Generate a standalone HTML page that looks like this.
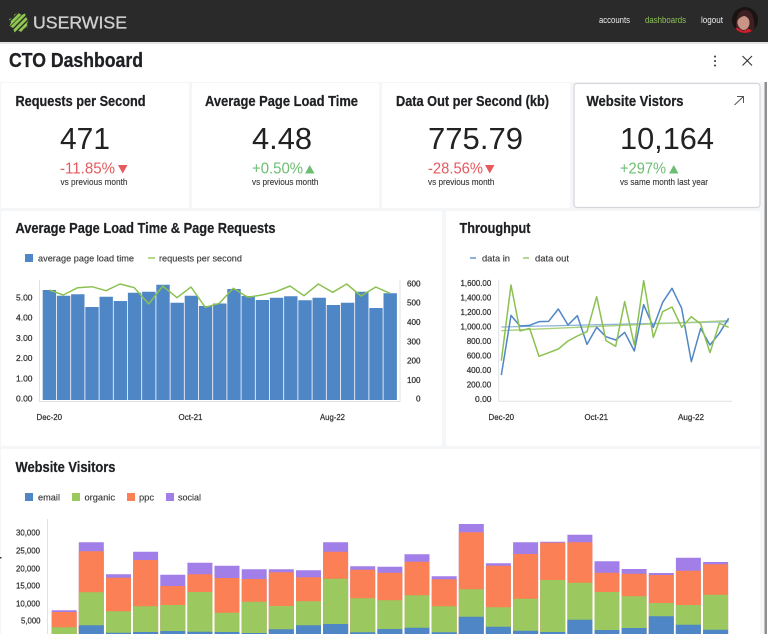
<!DOCTYPE html>
<html><head><meta charset="utf-8"><title>CTO Dashboard</title>
<style>
html,body{margin:0;padding:0;background:#fff;width:768px;height:634px;overflow:hidden}
svg{display:block;filter:blur(.35px)}
text{font-family:"Liberation Sans",Arial,sans-serif;fill:#1f2023}
.t{font-weight:700;font-size:14.5px;stroke:#1f2023;stroke-width:.25px}
.n{font-size:31px;fill:#222}
.d{font-size:16px}
.s{font-size:9px;fill:#333;stroke:#333;stroke-width:.1px}
.a{font-size:8.6px;fill:#333;stroke:#333;stroke-width:.25px}
.l{font-size:9.5px;fill:#333;stroke:#333;stroke-width:.12px}
.nav{font-size:9px;fill:#eee}
</style></head><body>
<svg width="768" height="634" viewBox="0 0 768 634" xmlns="http://www.w3.org/2000/svg">
<defs>
<clipPath id="lg"><path d="M18 12.500l3.500 2.500 3.500-1.500 1.500 4.500 2 2.500-1.500 3.500 1 3.500-4 1-2.500 3.500-3.500-1.500-3.500 2-1.500-4.500-3.500-2 1.500-3.500-2-3.500 4-1 1.500-3.500z"/></clipPath>
<clipPath id="av"><circle cx="745" cy="20" r="13"/></clipPath>
</defs>
<rect width="768" height="634" fill="#f5f6f8"/>
<!-- header -->
<rect width="768" height="42" fill="#2a2a2a"/>
<rect y="42" width="768" height="2" fill="#e4e4e4"/>
<rect y="44" width="768" height="38" fill="#fff"/>
<g clip-path="url(#lg)" stroke="#8fc750" stroke-width="2.900">
<path d="M4 24L20 8M6 28L24 10M9 30L28 11M12 33L31 14M16 35L32 19M20 37L33 24"/>
</g>
<text x="33" y="28.500" font-size="17.500" stroke="#cfcfcf" stroke-width=".35" textLength="94" lengthAdjust="spacingAndGlyphs" style="fill:#cfcfcf">USERWISE</text>
<text class="nav" x="599" y="23" textLength="31" lengthAdjust="spacingAndGlyphs">accounts</text>
<text class="nav" x="645" y="23" textLength="41" lengthAdjust="spacingAndGlyphs" style="fill:#8dc35a">dashboards</text>
<text class="nav" x="701" y="23" textLength="22" lengthAdjust="spacingAndGlyphs">logout</text>
<g clip-path="url(#av)">
<rect x="731" y="6" width="28" height="28" fill="#191312"/>
<path d="M736 31c-1-14 3-21 9-21 7 0 10 7 9 21z" fill="#3d2022"/>
<path d="M737.500 21c1-3 5-5 7-5 3 1 5 3 5 7 0 4-3 7-6 7-3 0-7-5-6-9z" fill="#c99486"/>
<path d="M733 34c1-5 3-6 5-6l5 3 5-2c2 0 4 1 5 5z" fill="#c9202c"/>
</g>
<!-- title bar -->
<text x="9" y="67" font-size="20" font-weight="700" stroke="#1f2023" stroke-width=".3" textLength="134" lengthAdjust="spacingAndGlyphs">CTO Dashboard</text>
<g fill="#333"><circle cx="715" cy="56.500" r="1"/><circle cx="715" cy="61" r="1"/><circle cx="715" cy="65.500" r="1"/></g>
<path d="M742.500 56l9.500 9.500M752 56l-9.500 9.500" stroke="#333" stroke-width="1.100" fill="none"/>
<!-- cards -->
<g fill="#fff">
<rect x="1" y="83" width="188" height="125" rx="2"/>
<rect x="192" y="83" width="187" height="125" rx="2"/>
<rect x="382" y="83" width="188" height="125" rx="2"/>
<rect x="574" y="83.500" width="186" height="124" rx="3" stroke="#d3d6da" stroke-width="1.200"/>
<rect x="1" y="211" width="441" height="235" rx="2"/>
<rect x="446" y="211" width="314" height="235" rx="2"/>
<rect x="1" y="449" width="759" height="185" rx="2"/>
</g>
<rect x="764.500" y="82" width="2.500" height="552" fill="#8f8f8f"/>
<rect x="767" y="82" width="1" height="552" fill="#fff"/>
<rect x="0" y="557" width="1.500" height="1.500" fill="#333"/>
<!-- card 1 -->
<text class="t" x="15.500" y="106" textLength="130" lengthAdjust="spacingAndGlyphs">Requests per Second</text>
<text class="n" x="60" y="149" textLength="50" lengthAdjust="spacingAndGlyphs">471</text>
<text class="d" x="60" y="173.500" textLength="55" lengthAdjust="spacingAndGlyphs" style="fill:#e6595d">-11.85%</text>
<path d="M118 165h9.500l-4.750 8.500z" fill="#e6595d"/>
<text class="s" x="60.500" y="185" textLength="67" lengthAdjust="spacingAndGlyphs">vs previous month</text>
<!-- card 2 -->
<text class="t" x="205" y="106" textLength="153" lengthAdjust="spacingAndGlyphs">Average Page Load Time</text>
<text class="n" x="252" y="149" textLength="60" lengthAdjust="spacingAndGlyphs">4.48</text>
<text class="d" x="252" y="173.500" textLength="51" lengthAdjust="spacingAndGlyphs" style="fill:#6dbd72">+0.50%</text>
<path d="M305 173.500h9.500l-4.750-8.500z" fill="#6dbd72"/>
<text class="s" x="252" y="185" textLength="66.500" lengthAdjust="spacingAndGlyphs">vs previous month</text>
<!-- card 3 -->
<text class="t" x="396" y="106" textLength="153" lengthAdjust="spacingAndGlyphs">Data Out per Second (kb)</text>
<text class="n" x="428" y="149" textLength="95" lengthAdjust="spacingAndGlyphs">775.79</text>
<text class="d" x="428" y="173.500" textLength="55" lengthAdjust="spacingAndGlyphs" style="fill:#e6595d">-28.56%</text>
<path d="M485 165h9.500l-4.750 8.500z" fill="#e6595d"/>
<text class="s" x="428" y="185" textLength="66.500" lengthAdjust="spacingAndGlyphs">vs previous month</text>
<!-- card 4 -->
<text class="t" x="586.500" y="106" textLength="97" lengthAdjust="spacingAndGlyphs">Website Vistors</text>
<path d="M734.500 105l9-8.500M737 96.500h6.500V103" stroke="#555" stroke-width="1" fill="none"/>
<text class="n" x="620" y="149" textLength="94" lengthAdjust="spacingAndGlyphs">10,164</text>
<text class="d" x="620" y="173.500" textLength="46" lengthAdjust="spacingAndGlyphs" style="fill:#6dbd72">+297%</text>
<path d="M669 173.500h9.500l-4.750-8.500z" fill="#6dbd72"/>
<text class="s" x="620" y="185" textLength="88" lengthAdjust="spacingAndGlyphs">vs same month last year</text>
<!-- chart 1 -->
<text class="t" x="15.500" y="233" textLength="260" lengthAdjust="spacingAndGlyphs">Average Page Load Time &amp; Page Requests</text>
<rect x="25" y="254" width="8" height="8" fill="#4f86c6"/>
<text class="l" x="38" y="261.500" textLength="96" lengthAdjust="spacingAndGlyphs">average page load time</text>
<path d="M148 258h7" stroke="#8cc152" stroke-width="1.300"/>
<text class="l" x="159" y="261.500" textLength="83" lengthAdjust="spacingAndGlyphs">requests per second</text>
<path d="M39.500 280V401.500H400V280" stroke="#dfe1e4" stroke-width="1" fill="none"/>
<path fill="#4f86c6" d="M42.700 290V400h13.400V290zM56.900 295.700V400h13.400V295.700zM71.100 294.300V400h13.400V294.300zM85.300 307V400h13.400V307zM99.500 296.700V400h13.400V296.700zM113.700 301V400h13.400V301zM127.900 292.700V400h13.400V292.700zM142.100 291.700V400h13.400V291.700zM156.300 284.700V400h13.400V284.700zM170.500 302.700V400h13.400V302.700zM184.700 295.700V400h13.400V295.700zM198.900 306V400h13.400V306zM213.100 303.500V400h13.400V303.500zM227.300 289V400h13.400V289zM241.500 296V400h13.400V296zM255.700 300V400h13.400V300zM269.900 297.700V400h13.400V297.700zM284.100 296.300V400h13.400V296.300zM298.300 300.300V400h13.400V300.300zM312.500 297.700V400h13.400V297.700zM326.700 305V400h13.400V305zM340.900 302.700V400h13.400V302.700zM355.100 291.700V400h13.400V291.700zM369.300 308V400h13.400V308zM383.500 293.300V400h13.400V293.300z"/>
<polyline fill="none" stroke="#8cc152" stroke-width="1.500" stroke-linejoin="round" points="49.300,290 63.300,295 77.700,287.700 92,286.700 106,290.700 120,284 134.300,287.700 148.700,304 162.700,286 177,297.700 191,287 205.300,307.300 219.300,303.300 233.300,288.300 247.700,297.300 261.700,295 276,291.700 290,286 304,295.700 318.300,284 332.700,292.300 346.700,284 361,296 375.700,287 390,293.300"/>
<g class="y">
<text class="a" x="16" y="300.300" textLength="16.500" lengthAdjust="spacingAndGlyphs">5.00</text>
<text class="a" x="16" y="320.500" textLength="16.500" lengthAdjust="spacingAndGlyphs">4.00</text>
<text class="a" x="16" y="341" textLength="16.500" lengthAdjust="spacingAndGlyphs">3.00</text>
<text class="a" x="16" y="361" textLength="16.500" lengthAdjust="spacingAndGlyphs">2.00</text>
<text class="a" x="16" y="381.500" textLength="16.500" lengthAdjust="spacingAndGlyphs">1.00</text>
<text class="a" x="16" y="401.500" textLength="16.500" lengthAdjust="spacingAndGlyphs">0.00</text>
<text class="a" x="407" y="286.300" textLength="13.500" lengthAdjust="spacingAndGlyphs">600</text>
<text class="a" x="407" y="305.500" textLength="13.500" lengthAdjust="spacingAndGlyphs">500</text>
<text class="a" x="407" y="325" textLength="13.500" lengthAdjust="spacingAndGlyphs">400</text>
<text class="a" x="407" y="344.300" textLength="13.500" lengthAdjust="spacingAndGlyphs">300</text>
<text class="a" x="407" y="363.500" textLength="13.500" lengthAdjust="spacingAndGlyphs">200</text>
<text class="a" x="407" y="383" textLength="13.500" lengthAdjust="spacingAndGlyphs">100</text>
<text class="a" x="416" y="401.500" textLength="4.500" lengthAdjust="spacingAndGlyphs">0</text>
<text class="a" x="36.500" y="420" textLength="25.500" lengthAdjust="spacingAndGlyphs">Dec-20</text>
<text class="a" x="178.500" y="420" textLength="24" lengthAdjust="spacingAndGlyphs">Oct-21</text>
<text class="a" x="320" y="420" textLength="25" lengthAdjust="spacingAndGlyphs">Aug-22</text>
</g>
<!-- chart 2 -->
<text class="t" x="459.500" y="233" textLength="71" lengthAdjust="spacingAndGlyphs">Throughput</text>
<path d="M470 258h6" stroke="#4f86c6" stroke-width="1.300"/>
<text class="l" x="482" y="261.500" textLength="28" lengthAdjust="spacingAndGlyphs">data in</text>
<path d="M523 258h6" stroke="#8cc152" stroke-width="1.300"/>
<text class="l" x="535" y="261.500" textLength="34" lengthAdjust="spacingAndGlyphs">data out</text>
<path d="M498.700 280V401.300H732" stroke="#dfe1e4" stroke-width="1" fill="none"/>
<g transform="translate(450 210) scale(.33333)" fill="none" stroke-linejoin="round">
<path d="M154 351L836 335" stroke="#8fb3dd" stroke-width="4"/>
<path d="M154 362L836 332" stroke="#a9d07a" stroke-width="4"/>
<polyline stroke="#4f86c6" stroke-width="4.500" points="154,495 183,316 210,348 239,346 267,335 296,334 325,297 354,345 382,317 411,403 440,352 468,380 497,390 524,367 553,423 581,284 610,352 638,277 666,235 695,295 724,455 752,355 780,405 808,370 836,325"/>
<polyline stroke="#8cc152" stroke-width="4.500" points="154,452 183,225 210,363 239,355 267,439 296,428 325,417 354,393 382,378 411,365 440,260 468,392 497,409 524,275 553,405 581,212 610,382 638,305 666,291 695,352 724,320 752,342 780,428 808,340 836,352"/>
</g>
<text class="a" x="460.500" y="286" textLength="30.700" lengthAdjust="spacingAndGlyphs">1,600.00</text>
<text class="a" x="460.500" y="300.500" textLength="30.700" lengthAdjust="spacingAndGlyphs">1,400.00</text>
<text class="a" x="460.500" y="315" textLength="30.700" lengthAdjust="spacingAndGlyphs">1,200.00</text>
<text class="a" x="460.500" y="329.500" textLength="30.700" lengthAdjust="spacingAndGlyphs">1,000.00</text>
<text class="a" x="466.700" y="344" textLength="24.500" lengthAdjust="spacingAndGlyphs">800.00</text>
<text class="a" x="466.700" y="358.300" textLength="24.500" lengthAdjust="spacingAndGlyphs">600.00</text>
<text class="a" x="466.700" y="373" textLength="24.500" lengthAdjust="spacingAndGlyphs">400.00</text>
<text class="a" x="466.700" y="387.300" textLength="24.500" lengthAdjust="spacingAndGlyphs">200.00</text>
<text class="a" x="475" y="402" textLength="16.500" lengthAdjust="spacingAndGlyphs">0.00</text>
<text class="a" x="488.500" y="420" textLength="25.500" lengthAdjust="spacingAndGlyphs">Dec-20</text>
<text class="a" x="584.500" y="420" textLength="23.500" lengthAdjust="spacingAndGlyphs">Oct-21</text>
<text class="a" x="678" y="420" textLength="26" lengthAdjust="spacingAndGlyphs">Aug-22</text>
<!-- chart 3 -->
<text class="t" x="15.500" y="472" textLength="100" lengthAdjust="spacingAndGlyphs">Website Visitors</text>
<rect x="25" y="493" width="8" height="8" fill="#4f86c6"/>
<text class="l" x="38" y="500.500" textLength="22" lengthAdjust="spacingAndGlyphs">email</text>
<rect x="72" y="493" width="8" height="8" fill="#9bc95f"/>
<text class="l" x="84.500" y="500.500" textLength="30.500" lengthAdjust="spacingAndGlyphs">organic</text>
<rect x="127" y="493" width="8" height="8" fill="#fb8055"/>
<text class="l" x="139" y="500.500" textLength="15" lengthAdjust="spacingAndGlyphs">ppc</text>
<rect x="166" y="493" width="8" height="8" fill="#a27fe8"/>
<text class="l" x="178" y="500.500" textLength="23" lengthAdjust="spacingAndGlyphs">social</text>
<path d="M47.500 519V634" stroke="#dfe1e4" stroke-width="1"/>
<text class="a" x="16" y="535.500" textLength="24" lengthAdjust="spacingAndGlyphs">30,000</text>
<text class="a" x="16" y="553.300" textLength="24" lengthAdjust="spacingAndGlyphs">25,000</text>
<text class="a" x="16" y="571.300" textLength="24" lengthAdjust="spacingAndGlyphs">20,000</text>
<text class="a" x="16" y="588.500" textLength="24" lengthAdjust="spacingAndGlyphs">15,000</text>
<text class="a" x="16" y="606.300" textLength="24" lengthAdjust="spacingAndGlyphs">10,000</text>
<text class="a" x="21" y="623.500" textLength="19.500" lengthAdjust="spacingAndGlyphs">5,000</text>
<path fill="#a27fe8" d="M51.700 610.300V634h25V610.300zM78.800 542.300V634h25V542.300zM106 574.300V634h25V574.300zM133.100 551.700V634h25V551.700zM160.300 574.700V634h25V574.700zM187.400 562.700V634h25V562.700zM214.500 565.700V634h25V565.700zM241.700 569.300V634h25V569.300zM268.800 569.300V634h25V569.300zM296 570.300V634h25V570.300zM323.100 542.300V634h25V542.300zM350.200 566.300V634h25V566.300zM377.400 566.700V634h25V566.700zM404.500 554.300V634h25V554.300zM431.700 576.300V634h25V576.300zM458.800 524V634h25V524zM485.900 563.300V634h25V563.300zM513.100 542.300V634h25V542.300zM540.200 541.700V634h25V541.700zM567.400 534.700V634h25V534.700zM594.500 561.300V634h25V561.300zM621.600 569V634h25V569zM648.800 573V634h25V573zM675.900 557.700V634h25V557.700zM703.100 562V634h25V562z"/>
<path fill="#fb8055" d="M51.700 612V634h25V612zM78.800 551.300V634h25V551.300zM106 577.700V634h25V577.700zM133.100 560V634h25V560zM160.300 586V634h25V586zM187.400 574.300V634h25V574.300zM214.500 578V634h25V578zM241.700 579V634h25V579zM268.800 572.300V634h25V572.300zM296 577.300V634h25V577.300zM323.100 551.700V634h25V551.700zM350.200 569.700V634h25V569.700zM377.400 572.700V634h25V572.700zM404.500 561.700V634h25V561.700zM431.700 579.300V634h25V579.300zM458.800 532.300V634h25V532.300zM485.900 565.700V634h25V565.700zM513.100 554V634h25V554zM540.200 542.700V634h25V542.700zM567.400 542.300V634h25V542.300zM594.500 572.700V634h25V572.700zM621.600 573.700V634h25V573.700zM648.800 575V634h25V575zM675.900 570.700V634h25V570.700zM703.100 564.300V634h25V564.300z"/>
<path fill="#9bc95f" d="M51.700 627.300V634h25V627.300zM78.800 592.300V634h25V592.300zM106 611.300V634h25V611.300zM133.100 606.300V634h25V606.300zM160.300 605V634h25V605zM187.400 592V634h25V592zM214.500 612.700V634h25V612.700zM241.700 601.700V634h25V601.700zM268.800 606V634h25V606zM296 601.300V634h25V601.300zM323.100 578.700V634h25V578.700zM350.200 598.300V634h25V598.300zM377.400 600.300V634h25V600.300zM404.500 595.300V634h25V595.300zM431.700 606.300V634h25V606.300zM458.800 589.300V634h25V589.300zM485.900 607.300V634h25V607.300zM513.100 598.700V634h25V598.700zM540.200 580V634h25V580zM567.400 582.700V634h25V582.700zM594.500 592V634h25V592zM621.600 596.300V634h25V596.300zM648.800 603V634h25V603zM675.900 605V634h25V605zM703.100 594.700V634h25V594.700z"/>
<path fill="#4f86c6" d="M78.800 625.300V634h25V625.300zM106 632.700V634h25V632.700zM133.100 632V634h25V632zM160.300 631V634h25V631zM187.400 631.700V634h25V631.700zM214.500 632V634h25V632zM241.700 633V634h25V633zM268.800 629.300V634h25V629.300zM296 625.300V634h25V625.300zM323.100 624V634h25V624zM350.200 632.300V634h25V632.300zM377.400 629V634h25V629zM404.500 627.700V634h25V627.700zM431.700 632.300V634h25V632.300zM458.800 616.700V634h25V616.700zM485.900 626.700V634h25V626.700zM513.100 630.700V634h25V630.700zM540.200 632V634h25V632zM567.400 619.700V634h25V619.700zM594.500 630V634h25V630zM621.600 628V634h25V628zM648.800 616.300V634h25V616.300zM675.900 624.700V634h25V624.700zM703.100 629.700V634h25V629.700z"/>
</svg>
</body></html>
